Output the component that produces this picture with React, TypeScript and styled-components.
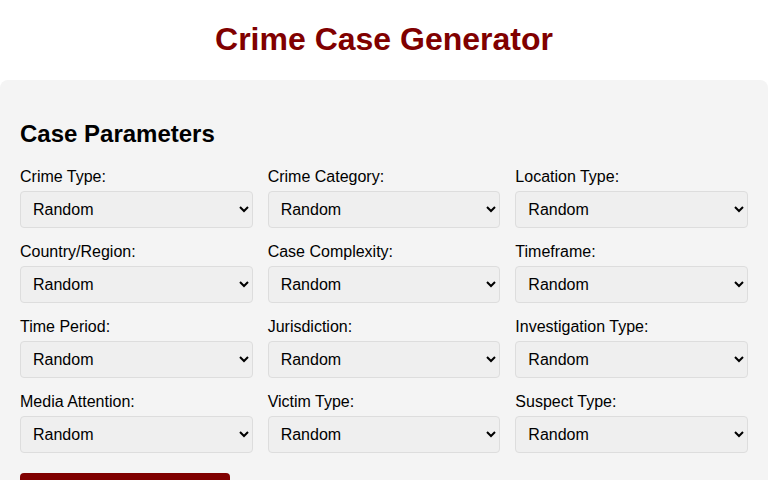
import styled, { createGlobalStyle } from 'styled-components';

const fields = [
    'Crime Type',
    'Crime Category',
    'Location Type',
    'Country/Region',
    'Case Complexity',
    'Timeframe',
    'Time Period',
    'Jurisdiction',
    'Investigation Type',
    'Media Attention',
    'Victim Type',
    'Suspect Type',
];

const App = () => {
    return (
        <>
            <GlobalStyle />
            <Title>Crime Case Generator</Title>
            <Panel>
                <SectionTitle>Case Parameters</SectionTitle>
                <FieldGrid>
                    {fields.map((name) => (
                        <Field key={name}>
                            <Label>{name}:</Label>
                            <Select defaultValue="Random">
                                <option>Random</option>
                            </Select>
                        </Field>
                    ))}
                </FieldGrid>
                <GenerateButton>Generate Case</GenerateButton>
            </Panel>
        </>
    );
};

const GlobalStyle = createGlobalStyle`
    body {
        margin: 0;
        background: #ffffff;
        font-family: "Liberation Sans", Arial, sans-serif;
        color: #000;
    }
`;

const Title = styled.h1`
    text-align: center;
    color: #800000;
    font-size: 32px;
    margin: 0.67em 0;
`;

const Panel = styled.div`
    background: #f4f4f4;
    border-radius: 8px;
    padding: 20px;
`;

const SectionTitle = styled.h2`
    font-size: 24px;
    margin: 0.83em 0;
`;

const FieldGrid = styled.div`
    display: grid;
    grid-template-columns: repeat(3, 1fr);
    gap: 15px;
`;

const Field = styled.div`
    display: flex;
    flex-direction: column;
`;

const Label = styled.label`
    display: block;
    font-size: 16px;
    margin-bottom: 5px;
`;

const Select = styled.select`
    width: 100%;
    padding: 8px;
    font-family: "Liberation Sans", Arial, sans-serif;
    font-size: 16px;
    border: 1px solid #ddd;
    border-radius: 4px;
    background-color: #efefef;
    color: #000;
`;

const GenerateButton = styled.button`
    margin-top: 20px;
    width: 210px;
    padding: 12px 20px;
    background: #800000;
    color: #fff;
    border: none;
    border-radius: 4px;
    font-size: 16px;
    font-family: "Liberation Sans", Arial, sans-serif;
    cursor: pointer;
`;

export default App;
